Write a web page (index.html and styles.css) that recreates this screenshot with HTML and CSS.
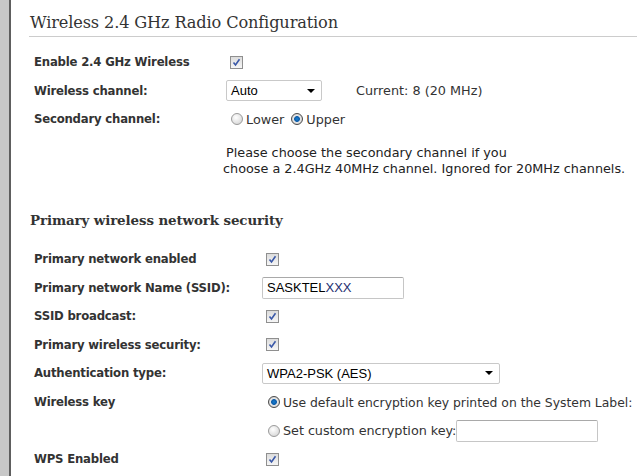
FILE: index.html
```html
<!DOCTYPE html>
<html>
<head>
<meta charset="utf-8">
<link rel="stylesheet" href="styles.css">
</head>
<body>
<div class="page">
  <div class="sidebar"></div>
  <div class="main">
    <h1 class="title">Wireless 2.4 GHz Radio Configuration</h1>
    <div class="form form-radio">
      <div class="label">Enable 2.4 GHz Wireless</div>
      <div class="field"><span class="cb"><svg viewBox="0 0 13 13" width="13" height="13"><path d="M3.5 6.5 L5.5 9 L9.5 3.2" fill="none" stroke="#3a58a8" stroke-width="1.6"/></svg></span></div>

      <div class="label">Wireless channel:</div>
      <div class="field">
        <div class="select select-channel"><span>Auto</span><span class="arrow"></span></div>
        <span class="current">Current: 8 (20 MHz)</span>
      </div>

      <div class="label">Secondary channel:</div>
      <div class="field field-radios">
        <span class="radio"></span><span class="opt">Lower</span>
        <span class="radio on"></span><span class="opt">Upper</span>
      </div>
    </div>
    <div class="help">
      <div class="help-l1">Please choose the secondary channel if you</div>
      <div>choose a 2.4GHz 40MHz channel. Ignored for 20MHz channels.</div>
    </div>

    <h2 class="subtitle">Primary wireless network security</h2>
    <div class="form form-sec">
      <div class="label">Primary network enabled</div>
      <div class="field"><span class="cb cb2"><svg viewBox="0 0 13 13" width="13" height="13"><path d="M3.5 6.5 L5.5 9 L9.5 3.2" fill="none" stroke="#3a58a8" stroke-width="1.6"/></svg></span></div>

      <div class="label">Primary network Name (SSID):</div>
      <div class="field"><div class="input input-ssid">SASKTEL<span class="xxx">XXX</span></div></div>

      <div class="label">SSID broadcast:</div>
      <div class="field"><span class="cb cb2"><svg viewBox="0 0 13 13" width="13" height="13"><path d="M3.5 6.5 L5.5 9 L9.5 3.2" fill="none" stroke="#3a58a8" stroke-width="1.6"/></svg></span></div>

      <div class="label">Primary wireless security:</div>
      <div class="field"><span class="cb cb2"><svg viewBox="0 0 13 13" width="13" height="13"><path d="M3.5 6.5 L5.5 9 L9.5 3.2" fill="none" stroke="#3a58a8" stroke-width="1.6"/></svg></span></div>

      <div class="label">Authentication type:</div>
      <div class="field"><div class="select select-auth"><span>WPA2-PSK (AES)</span><span class="arrow"></span></div></div>

      <div class="label">Wireless key</div>
      <div class="field field-key"><span class="radio on"></span><span class="opt opt-long">Use default encryption key printed on the System Label:</span></div>

      <div class="label"></div>
      <div class="field field-key"><span class="radio"></span><span class="opt opt-custom">Set custom encryption key:</span><div class="input input-key"></div></div>

      <div class="label">WPS Enabled</div>
      <div class="field"><span class="cb cb2"><svg viewBox="0 0 13 13" width="13" height="13"><path d="M3.5 6.5 L5.5 9 L9.5 3.2" fill="none" stroke="#3a58a8" stroke-width="1.6"/></svg></span></div>
    </div>
  </div>
</div>
</body>
</html>
```
FILE: styles.css
```css
html, body {
  margin: 0;
  padding: 0;
  background: #fff;
  height: 100%;
  overflow: hidden;
}
.page {
  display: flex;
  height: 476px;
}
.sidebar {
  width: 9px;
  background: #c8c8c8;
  border-right: 2px solid #5e5e5e;
  flex: none;
}
.main {
  flex: 1;
  min-width: 0;
  padding-left: 18px;
}
.title {
  margin: 0;
  padding: 12px 0 0 1px;
  height: 24px;
  font-family: "DejaVu Serif", "Liberation Serif", serif;
  font-weight: normal;
  font-size: 16.2px;
  line-height: 21px;
  color: #333;
  border-bottom: 1px solid #cccccc;
  letter-spacing: -0.15px;
}
.form {
  display: grid;
  grid-auto-rows: 28.6px;
  align-items: center;
  padding-left: 5px;
  font-family: "DejaVu Sans", Verdana, sans-serif;
  font-size: 12.8px;
  color: #333;
}
.form-radio {
  margin-top: 11px;
  grid-template-columns: 192px 1fr;
}
.form-sec {
  margin-top: 16px;
  grid-template-columns: 228px 1fr;
}
.label {
  font-weight: bold;
  font-size: 11.7px;
  letter-spacing: -0.2px;
  white-space: nowrap;
}
.field {
  display: flex;
  align-items: center;
  white-space: nowrap;
}
.cb {
  display: inline-flex;
  width: 11px;
  height: 11px;
  border: 1px solid #8f8f8f;
  background: linear-gradient(#dcdcdc, #f6f6f6);
  margin-left: 4px;
  align-items: center;
  justify-content: center;
  overflow: hidden;
}
.cb svg { flex: none; }
.cb2 { margin-left: 4px; }
.select {
  box-sizing: border-box;
  height: 21px;
  border: 1px solid #c9c9c9;
  border-radius: 2px;
  background: #fff;
  display: flex;
  align-items: center;
  justify-content: space-between;
  padding: 0 6px 0 4px;
  font-family: "Liberation Sans", Arial, sans-serif;
  font-size: 13px;
  color: #000;
}
.arrow {
  width: 0;
  height: 0;
  border-left: 4px solid transparent;
  border-right: 4px solid transparent;
  border-top: 4px solid #000;
}
.select-channel { width: 96px; }
.select-auth { width: 238px; }
.current {
  margin-left: 34px;
  color: #333;
}
.radio {
  box-sizing: border-box;
  display: inline-block;
  width: 12px;
  height: 12px;
  border-radius: 50%;
  border: 1px solid #9a9a9a;
  background: radial-gradient(circle at 40% 35%, #ffffff, #cfcfcf);
  margin-left: 5px;
  flex: none;
}
.radio.on {
  border-color: #4a4a4a;
  background: radial-gradient(circle, #1a7fd0 0, #0a5aa8 2.5px, #e8e8e8 3.3px, #c8c8c8 6px);
}
.opt {
  margin-left: 3px;
  margin-right: 2px;
}
.field-key .radio { margin-left: 6px; }
.opt-long {
  font-size: 12.4px;
  letter-spacing: -0.02px;
  margin-right: 0;
}
.opt-custom {
  margin-right: 0;
  letter-spacing: -0.05px;
}
.input {
  box-sizing: border-box;
  height: 22px;
  border: 1px solid #c6c6c6;
  border-top-color: #a9a9a9;
  border-radius: 2px;
  background: #fff;
  display: flex;
  align-items: center;
  padding-left: 4px;
  font-family: "Liberation Sans", Arial, sans-serif;
  font-size: 13px;
  color: #000;
}
.input-ssid { width: 142px; }
.xxx { color: #1f2f70; }
.input-key { width: 142px; margin-left: 0; }
.help {
  margin-top: 11px;
  padding-left: 194px;
  font-family: "DejaVu Sans", Verdana, sans-serif;
  font-size: 12.8px;
  line-height: 16px;
  color: #222;
  white-space: nowrap;
}
.help-l1 { padding-left: 3px; }
.subtitle {
  margin: 34px 0 0 1px;
  font-family: "DejaVu Serif", "Liberation Serif", serif;
  font-weight: bold;
  font-size: 13.4px;
  line-height: 18px;
  color: #333;
  letter-spacing: -0.1px;
}
```
